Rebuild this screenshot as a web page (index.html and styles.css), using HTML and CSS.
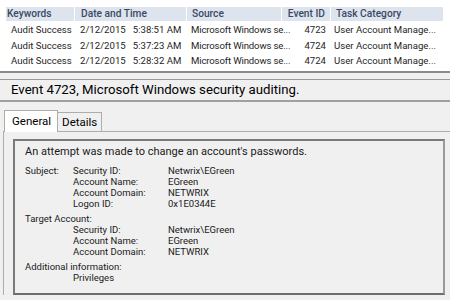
FILE: index.html
```html
<!DOCTYPE html>
<html lang="en">
<head>
  <meta charset="UTF-8" />
  <title>Event Viewer</title>
  <link rel="stylesheet" href="styles.css">
</head>
<body>
  <div class="events">
    <div class="row head">
      <div class="c kw">Keywords</div>
      <div class="c dt">Date and Time</div>
      <div class="c src">Source</div>
      <div class="c id">Event ID</div>
      <div class="c cat">Task Category</div>
    </div>
    <div class="row">
      <div class="c kw">Audit Success</div>
      <div class="c dt">2/12/2015&nbsp;&nbsp; 5:38:51 AM</div>
      <div class="c src">Microsoft Windows se...</div>
      <div class="c id">4723</div>
      <div class="c cat">User Account Manage...</div>
    </div>
    <div class="row">
      <div class="c kw">Audit Success</div>
      <div class="c dt">2/12/2015&nbsp;&nbsp; 5:37:23 AM</div>
      <div class="c src">Microsoft Windows se...</div>
      <div class="c id">4724</div>
      <div class="c cat">User Account Manage...</div>
    </div>
    <div class="row">
      <div class="c kw">Audit Success</div>
      <div class="c dt">2/12/2015&nbsp;&nbsp; 5:28:32 AM</div>
      <div class="c src">Microsoft Windows se...</div>
      <div class="c id">4724</div>
      <div class="c cat">User Account Manage...</div>
    </div>
  </div>

  <div class="splitter"></div>

  <div class="title">Event 4723, Microsoft Windows security auditing.</div>

  <div class="tabs">
    <div class="tab active">General</div>
    <div class="tab">Details</div>
  </div>

  <div class="panel">
    <div class="group">
      <p class="msg">An attempt was made to change an account's passwords.</p>

      <div class="fields">
        <span>Subject:</span><span>Security ID:</span><span>Netwrix\EGreen</span>
        <span></span><span>Account Name:</span><span>EGreen</span>
        <span></span><span>Account Domain:</span><span>NETWRIX</span>
        <span></span><span>Logon ID:</span><span>0x1E0344E</span>
      </div>

      <div class="fields">
        <span class="wide">Target Account:</span>
        <span></span><span>Security ID:</span><span>Netwrix\EGreen</span>
        <span></span><span>Account Name:</span><span>EGreen</span>
        <span></span><span>Account Domain:</span><span>NETWRIX</span>
      </div>

      <div class="fields">
        <span class="wide">Additional information:</span>
        <span></span><span>Privileges</span><span></span>
      </div>
    </div>
  </div>
</body>
</html>
```

FILE: styles.css
```css
body {
  margin: 0;
  width: 450px;
  height: 300px;
  overflow: hidden;
  background: #f0f0f0;
  font-family: Roboto, 'Noto Sans', sans-serif;
  color: #1e1e1e;
}

/* event list */
.events {
  background: #fff;
  padding: 7px 7px 0 6px;
  height: 64px;
}

.row {
  display: flex;
  height: 15.5px;
  align-items: center;
  font-size: 9.6px;
  white-space: nowrap;
}

.row.head {
  height: 14px;
  background: #dde4ed;
  color: #3a4a66;
  font-weight: 500;
  font-size: 10.2px;
  margin-bottom: 1px;
}

.row .c {
  box-sizing: border-box;
}

.row.head .c {
  border-right: 1px solid #fff;
  height: 14px;
  line-height: 14px;
}

.kw { width: 69px; padding-left: 1px; }
.dt { width: 112px; padding-left: 6px; }
.src { width: 95px; padding-left: 5px; }
.id { width: 49px; text-align: right; padding-right: 5px; }
.cat { width: 112px; padding-left: 5px; }

.row:not(.head) .kw { padding-left: 5px; }
.row:not(.head) .dt { padding-left: 5px; }
.row:not(.head) .src { padding-left: 4px; padding-right: 0; letter-spacing: -0.15px; }
.row:not(.head) .cat { padding-left: 3px; }

.row.head .cat { border-right: none; }

.splitter {
  height: 6px;
  border-top: 2px solid #8a8a8a;
}

/* detail pane */
.title {
  height: 20px;
  line-height: 20px;
  border-top: 1px solid #9a9a9a;
  border-bottom: 2px solid #a0a0a0;
  background: #f0f0f0;
  padding-left: 11px;
  font-size: 13.2px;
  color: #000;
}

.tabs {
  display: flex;
  align-items: flex-end;
  padding: 8px 0 0 4px;
  height: 21px;
}

.tab {
  border: 1px solid #adadad;
  border-bottom: none;
  font-size: 11.5px;
  color: #000;
  height: 18px;
  line-height: 19px;
  padding: 0 4px;
  background: #f0f0f0;
}

.tab.active {
  background: #fff;
  height: 21px;
  line-height: 20px;
  padding: 0 6px 0 7px;
  position: relative;
  z-index: 1;
  margin-bottom: -1px;
}

.tab + .tab {
  border-left: none;
}

.panel {
  margin-left: 3px;
  border-left: 1px solid #adadad;
  border-top: 1px solid #adadad;
  padding: 7px 5px 0 9px;
}

.group {
  border: 2px solid #7a7a7a;
  border-right-color: #9a9a9a;
  border-bottom-color: #6e6e6e;
  padding: 4px 10px 10px 10px;
  height: 138px;
  font-size: 9.5px;
  color: #1a1a1a;
}

.msg {
  margin: 0 0 6px 0;
  font-size: 11px;
  line-height: 14px;
}

.fields {
  display: grid;
  grid-template-columns: 48px 95px auto;
  line-height: 11px;
  margin-bottom: 4px;
}

.fields .wide {
  grid-column: 1 / 4;
}
```
